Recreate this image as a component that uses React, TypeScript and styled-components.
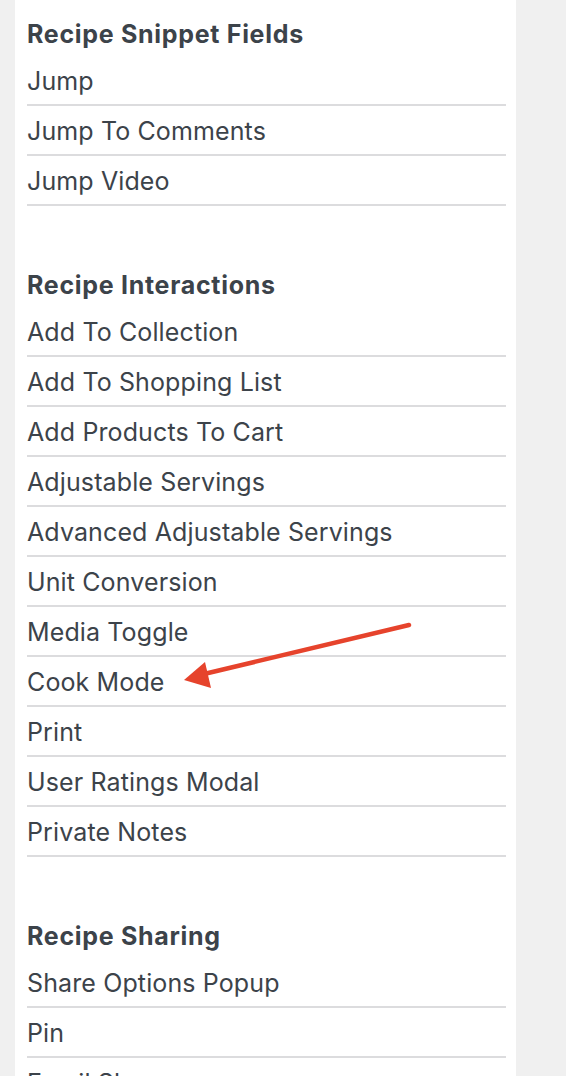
import React from "react";
import styled, { createGlobalStyle } from "styled-components";

const GlobalStyle = createGlobalStyle`
  html, body {
    margin: 0;
    padding: 0;
    background: #f0f0f0;
  }
  body {
    font-family: Inter, "Noto Sans", "Liberation Sans", sans-serif;
    color: #3c434a;
  }
`;

const sections = [
  {
    title: "Recipe Snippet Fields",
    items: ["Jump", "Jump To Comments", "Jump Video"],
  },
  {
    title: "Recipe Interactions",
    items: [
      "Add To Collection",
      "Add To Shopping List",
      "Add Products To Cart",
      "Adjustable Servings",
      "Advanced Adjustable Servings",
      "Unit Conversion",
      "Media Toggle",
      "Cook Mode",
      "Print",
      "User Ratings Modal",
      "Private Notes",
    ],
  },
  {
    title: "Recipe Sharing",
    items: ["Share Options Popup", "Pin", "Email Share"],
  },
];

const Page = styled.div`
  position: relative;
  display: flex;
  width: 586px;
  height: 1076px;
  overflow: hidden;
  background: #f0f0f0;
`;

const Gutter = styled.div<{ $w: number }>`
  flex: 0 0 ${({ $w }) => $w}px;
`;

const Edge = styled.div`
  flex: 0 0 20px;
  background: #ffffff;
`;

const Panel = styled.div`
  flex: 0 0 501px;
  box-sizing: border-box;
  background: #ffffff;
  padding: 12px 10px 0 12px;
  display: flex;
  flex-direction: column;
  gap: 57px;
`;

const Section = styled.div`
  display: flex;
  flex-direction: column;
`;

const Heading = styled.div`
  height: 44px;
  line-height: 44px;
  font-size: 25px;
  font-weight: 700;
  letter-spacing: 0.7px;
`;

const Item = styled.div`
  box-sizing: border-box;
  height: 50px;
  padding-top: 2px;
  line-height: 46px;
  font-size: 25px;
  font-weight: 400;
  letter-spacing: 0.12px;
  border-bottom: 2px solid #dcdcde;
  white-space: nowrap;
`;

const Arrow = styled.svg`
  position: absolute;
  left: 170px;
  top: 610px;
  width: 250px;
  height: 90px;
  pointer-events: none;
`;

export default function App() {
  return (
    <Page>
      <GlobalStyle />
      <Gutter $w={15} />
      <Panel>
        {sections.map((s) => (
          <Section key={s.title}>
            <Heading>{s.title}</Heading>
            {s.items.map((it) => (
              <Item key={it}>{it}</Item>
            ))}
          </Section>
        ))}
      </Panel>
      <Gutter $w={50} />
      <Edge />
      <Arrow viewBox="0 0 250 90">
        <line
          x1="239"
          y1="15"
          x2="34"
          y2="64"
          stroke="#e6432c"
          strokeWidth="4.5"
          strokeLinecap="round"
        />
        <polygon points="14,70 35,52 41,78" fill="#e6432c" />
      </Arrow>
    </Page>
  );
}
